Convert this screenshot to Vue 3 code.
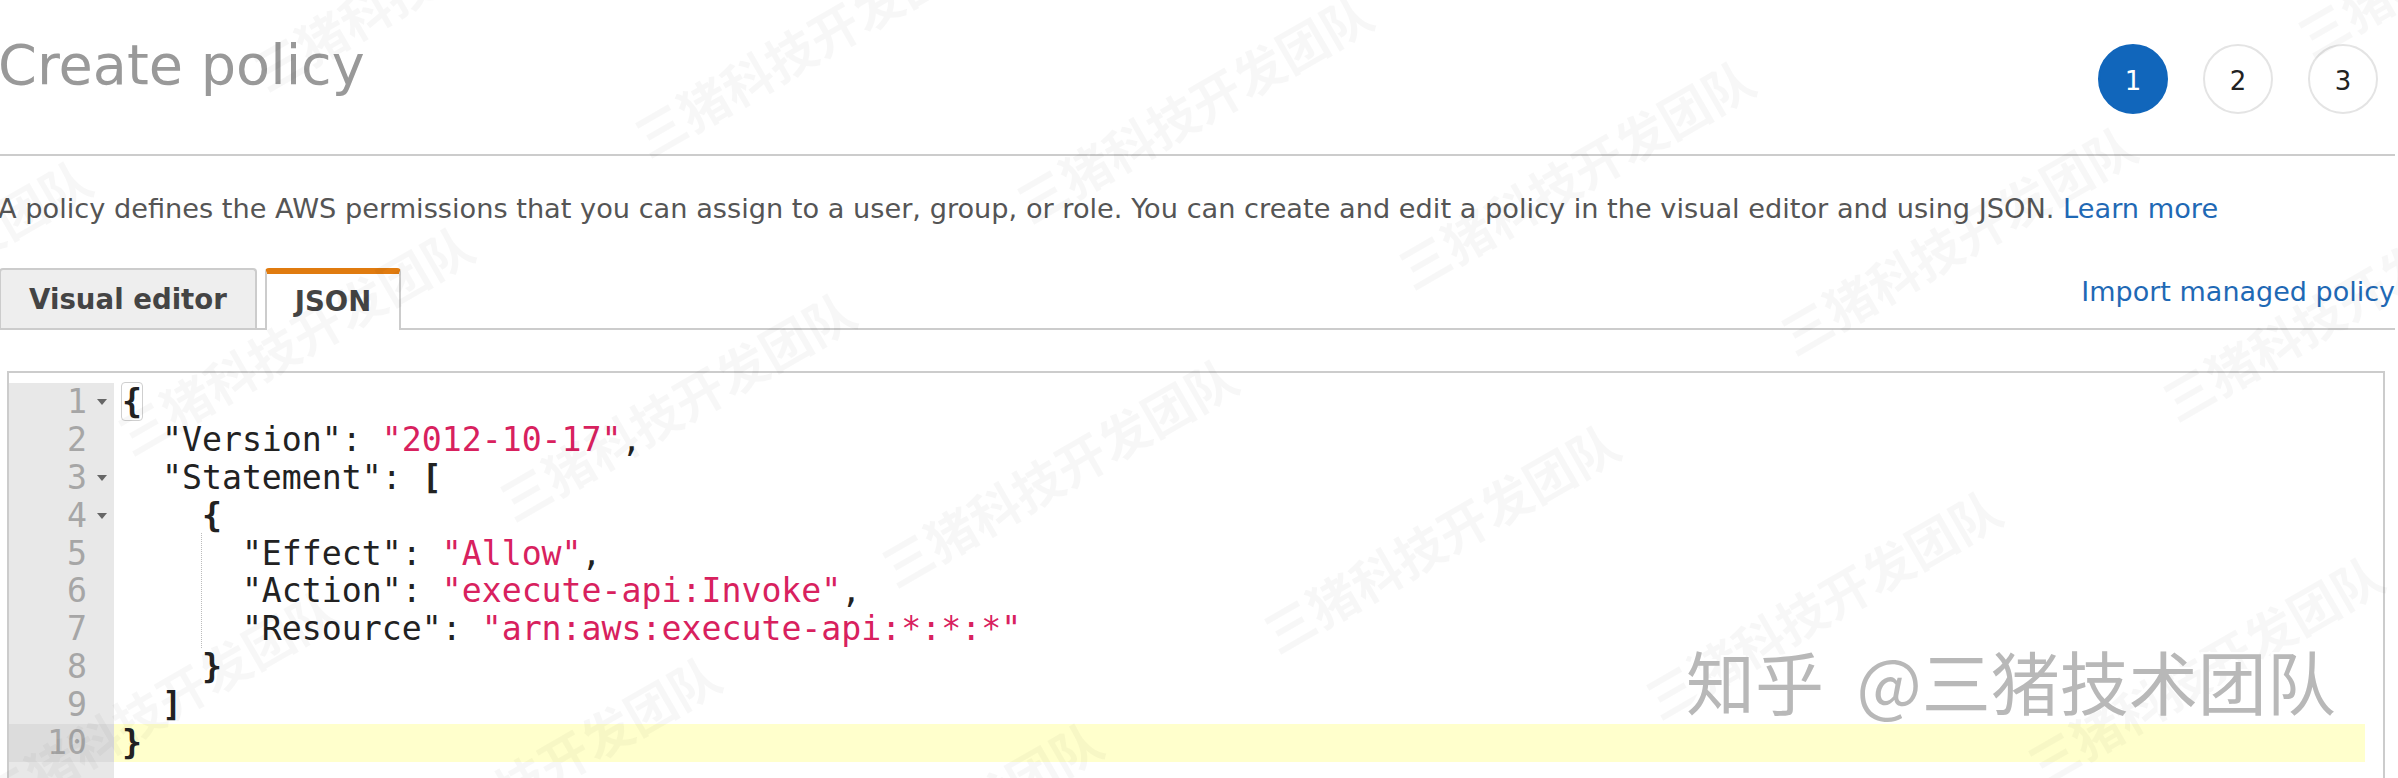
<script setup>
const steps = [
  { n: 1, active: true },
  { n: 2, active: false },
  { n: 3, active: false },
]

const lines = [
  { n: 1, fold: true, indent: 0, parts: [{ t: '{', c: 'brace match' }] },
  { n: 2, indent: 1, parts: [{ t: '"Version": ', c: 'key' }, { t: '"2012-10-17"', c: 'str' }, { t: ',', c: 'key' }] },
  { n: 3, fold: true, indent: 1, parts: [{ t: '"Statement": ', c: 'key' }, { t: '[', c: 'brace' }] },
  { n: 4, fold: true, indent: 2, parts: [{ t: '{', c: 'brace' }] },
  { n: 5, indent: 3, parts: [{ t: '"Effect": ', c: 'key' }, { t: '"Allow"', c: 'str' }, { t: ',', c: 'key' }] },
  { n: 6, indent: 3, parts: [{ t: '"Action": ', c: 'key' }, { t: '"execute-api:Invoke"', c: 'str' }, { t: ',', c: 'key' }] },
  { n: 7, indent: 3, parts: [{ t: '"Resource": ', c: 'key' }, { t: '"arn:aws:execute-api:*:*:*"', c: 'str' }] },
  { n: 8, indent: 2, parts: [{ t: '}', c: 'brace' }] },
  { n: 9, indent: 1, parts: [{ t: ']', c: 'brace' }] },
  { n: 10, active: true, indent: 0, parts: [{ t: '}', c: 'brace' }] },
]

const marks = []
for (let i = -3; i < 6; i++) {
  for (let j = -1; j < 4; j++) {
    const x = 811 + i * 382 - j * 135
    const y = 40 + i * 66 + j * 364
    if (x > -220 && x < 2620 && y > -120 && y < 900) {
      marks.push({ id: i + '_' + j, x, y })
    }
  }
}
</script>

<template>
  <div class="page">
    <header class="head">
      <h1 class="title">Create policy</h1>
      <ol class="steps">
        <li v-for="s in steps" :key="s.n" class="step" :class="{ on: s.active }">{{ s.n }}</li>
      </ol>
    </header>

    <p class="intro">
      A policy defines the AWS permissions that you can assign to a user, group, or role. You can create and edit a policy in the visual editor and using JSON.
      <a class="link">Learn more</a>
    </p>

    <div class="tabbar">
      <div class="tabs">
        <div class="tab">Visual editor</div>
        <div class="tab current">JSON</div>
      </div>
      <a class="link import">Import managed policy</a>
    </div>

    <section class="editor">
      <div class="gutter">
        <div v-for="l in lines" :key="l.n" class="gline" :class="{ active: l.active }">
          <span class="num">{{ l.n }}</span>
          <span class="fold" :class="{ shown: l.fold }"></span>
        </div>
      </div>
      <div class="code">
        <span class="guide"></span>
        <div v-for="l in lines" :key="l.n" class="cline" :class="{ active: l.active }">
          <span class="pad">{{ '  '.repeat(l.indent) }}</span><span v-for="(p, i) in l.parts" :key="i" :class="p.c">{{ p.t }}</span>
        </div>
      </div>
    </section>

    <span
      v-for="m in marks"
      :key="m.id"
      class="mark"
      :style="{ left: m.x + 'px', top: m.y + 'px' }"
    >三猪科技开发团队</span>
    <div class="brand">知乎 @三猪技术团队</div>
  </div>
</template>

<style scoped>
.page {
  position: relative;
  width: 2398px;
  height: 778px;
  overflow: hidden;
  background: #fff;
  font-family: "DejaVu Sans", sans-serif;
  color: #444;
}
.head {
  display: flex;
  align-items: flex-start;
  justify-content: space-between;
  height: 154px;
  width: 2395px;
  border-bottom: 2px solid #ccc;
}
.title {
  margin: 30px 0 0 -2px;
  font-size: 55.7px;
  line-height: 70px;
  font-weight: 400;
  color: #999;
}
.steps {
  display: flex;
  gap: 35px;
  margin: 44px 17px 0 0;
  padding: 0;
  list-style: none;
}
.step {
  display: flex;
  align-items: center;
  justify-content: center;
  width: 70px;
  height: 70px;
  box-sizing: border-box;
  border: 2px solid #e4e4e4;
  border-radius: 50%;
  padding-top: 3px;
  font-size: 26px;
  color: #222;
}
.step.on {
  background: #1166bb;
  border-color: #1166bb;
  color: #fff;
}
.intro {
  margin: 0 0 0 -2px;
  height: 112px;
  padding-top: 35px;
  box-sizing: border-box;
  font-size: 27.2px;
  line-height: 36px;
  color: #555;
  white-space: nowrap;
}
.link {
  color: #1f69b5;
}
.tabbar {
  display: flex;
  justify-content: space-between;
  height: 60px;
  width: 2395px;
  border-bottom: 2px solid #ccc;
}
.tabs {
  display: flex;
  gap: 8px;
  align-items: flex-start;
}
.tab {
  width: 258px;
  height: 60px;
  box-sizing: border-box;
  margin-left: -1px;
  display: flex;
  align-items: center;
  justify-content: center;
  background: #eee;
  border: 2px solid #ccc;
  border-bottom: 0;
  border-radius: 4px 4px 0 0;
  font-size: 27.6px;
  font-weight: 700;
  color: #444;
}
.tab.current {
  width: 136px;
  height: 62px;
  margin-left: 0;
  padding-bottom: 2px;
  background: #fff;
  border-top: 6px solid #e07b0f;
  font-size: 27.5px;
}
.import {
  font-size: 27px;
  line-height: 36px;
  margin-top: 6px;
  white-space: nowrap;
}
.editor {
  display: flex;
  margin: 41px 0 0 7px;
  width: 2378px;
  height: 420px;
  padding: 10px 0 0;
  box-sizing: border-box;
  border: 2px solid #ccc;
  border-bottom: 0;
  font-family: "DejaVu Sans Mono", monospace;
  font-size: 33.2px;
}
.gutter {
  width: 105px;
  flex: none;
  background: #e8e8e8;
  color: #a6a6a6;
}
.gline {
  display: flex;
  height: 37.9px;
  line-height: 37.9px;
  align-items: center;
}
.gline.active {
  background: #dcdcdc;
}
.num {
  width: 78px;
  text-align: right;
}
.fold {
  width: 0;
  height: 0;
  margin-left: 10px;
}
.fold.shown {
  border-left: 5px solid transparent;
  border-right: 5px solid transparent;
  border-top: 6px solid #666;
}
.code {
  position: relative;
  flex: 1;
  margin-right: 18px;
  color: #222;
}
.cline {
  height: 37.9px;
  line-height: 37.9px;
  padding-left: 8px;
  white-space: pre;
}
.cline.active {
  background: #ffffcc;
}
.str {
  color: #d8215e;
}
.brace {
  font-weight: 700;
}
.match {
  display: inline-block;
  height: 37px;
  outline: 1px solid #cfcfcf;
  border-radius: 3px;
}
.guide {
  position: absolute;
  left: 87px;
  top: 150px;
  height: 115px;
  border-left: 1px dotted #bbb;
}
.brand {
  position: absolute;
  left: 1686px;
  top: 630px;
  font-family: "Noto Sans CJK SC", sans-serif;
  font-size: 69px;
  font-weight: 400;
  word-spacing: 17px;
  line-height: 100px;
  color: #b8b8b8;
  text-shadow: -3px -2px 0 #fff;
  white-space: nowrap;
}
.mark {
  position: absolute;
  font-family: "Noto Sans CJK SC", sans-serif;
  font-size: 50px;
  font-weight: 700;
  line-height: 56px;
  color: rgba(0, 0, 0, 0.032);
  white-space: nowrap;
  transform: translate(-50%, -50%) rotate(-30deg);
  pointer-events: none;
}
</style>
